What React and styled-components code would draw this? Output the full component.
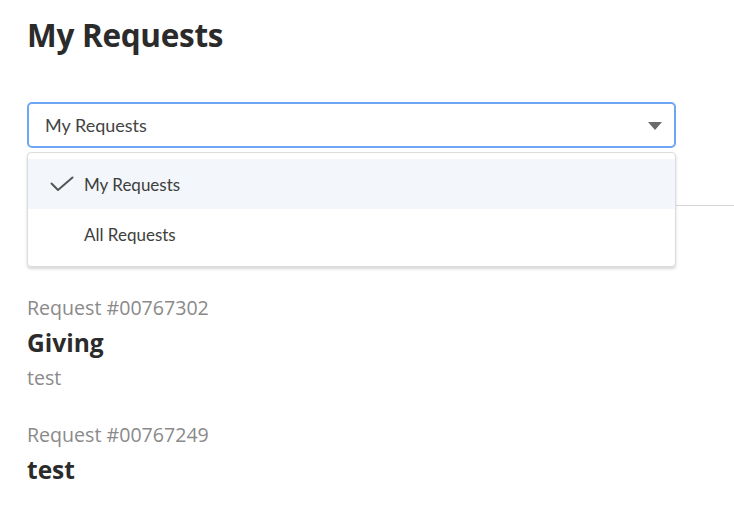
import React from "react";
import styled, { createGlobalStyle } from "styled-components";

const GlobalStyle = createGlobalStyle`
  body {
    margin: 0;
    background: #ffffff;
    font-family: "Open Sans", "Noto Sans", sans-serif;
  }
`;

const Page = styled.div`
  width: 734px;
  height: 512px;
  overflow: hidden;
  padding-left: 27px;
  box-sizing: border-box;
`;

const Heading = styled.h1`
  margin: 15px 0 0;
  font-size: 31.5px;
  line-height: 40px;
  font-weight: 700;
  color: #2b2b2b;
  letter-spacing: -0.3px;
`;

const SelectWrap = styled.div`
  position: relative;
  width: 649px;
  margin-top: 47px;
`;

const SelectBox = styled.div`
  height: 46px;
  box-sizing: border-box;
  border: 2px solid #6ea6f6;
  border-radius: 5px;
  display: flex;
  align-items: center;
  justify-content: space-between;
  padding: 0 12px 0 16px;
  font-family: Lato, "Open Sans", sans-serif;
  font-size: 18px;
  color: #444444;
`;

const Caret = styled.span`
  width: 0;
  height: 0;
  border-left: 7.5px solid transparent;
  border-right: 7.5px solid transparent;
  border-top: 8px solid #6b6b6b;
  margin-top: 2px;
`;

const Menu = styled.ul`
  position: absolute;
  top: calc(100% + 4px);
  left: 0;
  right: 0;
  margin: 0;
  padding: 6px 0 7px;
  list-style: none;
  background: #ffffff;
  border: 1px solid #dcdcdc;
  border-radius: 4px;
  box-shadow: 0 2px 3px rgba(0, 0, 0, 0.16);
  z-index: 2;
`;

const MenuItem = styled.li`
  height: 50px;
  display: flex;
  align-items: center;
  position: relative;
  padding-left: 56px;
  font-family: Lato, "Open Sans", sans-serif;
  font-size: 17px;
  color: #3e3e3c;
  background: ${(p) => (p.$active ? "#f3f6fa" : "transparent")};

  svg {
    position: absolute;
    left: 22px;
    top: 17px;
  }
`;

const Divider = styled.div`
  height: 1px;
  background: #d8d8d8;
  margin-top: 57px;
`;

const List = styled.div`
  margin-top: 89px;
  display: flex;
  flex-direction: column;
  gap: 31px;
`;

const Item = styled.div`
  display: flex;
  flex-direction: column;
`;

const Label = styled.div`
  font-size: 19.6px;
  line-height: 26px;
  color: #8a8a8a;
  margin-bottom: 6px;
`;

const Title = styled.div`
  font-size: 24.5px;
  line-height: 32px;
  font-weight: 700;
  color: #2b2b2b;
`;

const Desc = styled.div`
  font-size: 19.6px;
  line-height: 26px;
  color: #8a8a8a;
  margin-top: 6px;
`;

const Check = () => (
  <svg width="24" height="16" viewBox="0 0 24 16" fill="none">
    <polyline
      points="1.5,7.5 8,14 22.5,1.5"
      stroke="#555555"
      strokeWidth="2"
      strokeLinecap="round"
      strokeLinejoin="round"
    />
  </svg>
);

const requests = [
  { id: "00767302", title: "Giving", desc: "test" },
  { id: "00767249", title: "test" },
];

export default function App() {
  return (
    <Page>
      <GlobalStyle />
      <Heading>My Requests</Heading>
      <SelectWrap>
        <SelectBox>
          My Requests
          <Caret />
        </SelectBox>
        <Menu>
          <MenuItem $active>
            <Check />
            My Requests
          </MenuItem>
          <MenuItem>All Requests</MenuItem>
        </Menu>
      </SelectWrap>
      <Divider />
      <List>
        {requests.map((r) => (
          <Item key={r.id}>
            <Label>Request #{r.id}</Label>
            <Title>{r.title}</Title>
            {r.desc && <Desc>{r.desc}</Desc>}
          </Item>
        ))}
      </List>
    </Page>
  );
}
